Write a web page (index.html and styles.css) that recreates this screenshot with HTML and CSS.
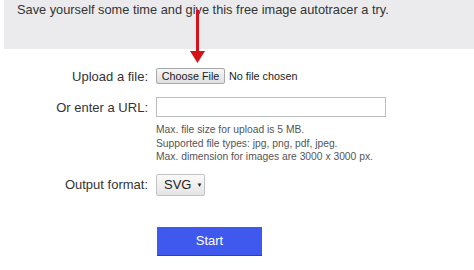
FILE: index.html
```html
<!DOCTYPE html>
<html lang="en">
<head>
  <meta charset="UTF-8" />
  <title>Autotracer</title>
  <link rel="stylesheet" href="styles.css">
</head>
<body>
  <div class="intro">Save yourself some time and give this free image autotracer a try.</div>

  <svg class="arrow" width="16" height="54" viewBox="0 0 16 54">
    <rect x="6" y="0" width="3" height="42" fill="#d3121a"/>
    <polygon points="0,41 15,41 7.5,53" fill="#d3121a"/>
  </svg>

  <form class="form">
    <div class="row">
      <label class="lbl">Upload a file:</label>
      <div class="ctl">
        <button type="button" class="filebtn">Choose File</button>
        <span class="nofile">No file chosen</span>
      </div>
    </div>

    <div class="row url-row">
      <label class="lbl">Or enter a URL:</label>
      <div class="ctl"><input type="text" class="url"></div>
    </div>

    <div class="row help-row">
      <span class="lbl"></span>
      <div class="help">
        Max. file size for upload is 5 MB.<br>
        Supported file types: jpg, png, pdf, jpeg.<br>
        Max. dimension for images are 3000 x 3000 px.
      </div>
    </div>

    <div class="row fmt-row">
      <label class="lbl">Output format:</label>
      <div class="ctl"><span class="select">SVG <span class="caret">▼</span></span></div>
    </div>

    <div class="row start-row">
      <span class="lbl"></span>
      <button type="button" class="start">Start</button>
    </div>
  </form>
</body>
</html>
```

FILE: styles.css
```css
body {
  margin: 0;
  font-family: "Liberation Sans", Arial, sans-serif;
  font-size: 13px;
  color: #333;
  background: #fff;
}
.intro {
  margin-left: 4px;
  height: 49px;
  padding: 2px 13px 0;
  box-sizing: border-box;
  background: #ebebed;
  font-size: 12.8px;
  line-height: 15px;
}
.arrow {
  position: absolute;
  left: 190px;
  top: 10px;
}
.row {
  display: flex;
  align-items: center;
  gap: 8px;
}
.lbl {
  width: 148px;
  flex: none;
  text-align: right;
}
.ctl {
  display: flex;
  align-items: center;
  gap: 4px;
}
.form {
  margin-top: 19px;
}
.filebtn {
  height: 16px;
  width: 69px;
  padding: 0;
  font-family: inherit;
  font-size: 10.8px;
  color: #222;
  border: 1px solid #a9a9a9;
  border-radius: 2px;
  background: linear-gradient(#f6f6f6, #dedede);
}
.nofile {
  font-size: 10.8px;
  color: #222;
}
.url-row {
  margin-top: 13px;
}
.url {
  width: 230px;
  height: 20px;
  box-sizing: border-box;
  margin: 0;
  border: 1px solid #bdbdbd;
  background: #fff;
}
.help-row {
  margin-top: 6px;
  align-items: flex-start;
}
.help {
  font-size: 10.3px;
  line-height: 13.5px;
  color: #555;
}
.fmt-row {
  margin-top: 10px;
}
.select {
  display: inline-flex;
  align-items: center;
  gap: 5px;
  height: 22px;
  width: 49px;
  box-sizing: border-box;
  padding-left: 7px;
  color: #222;
  border: 1px solid #c4c4c4;
  border-radius: 2px;
  background: linear-gradient(#fafafa, #e4e4e4);
}
.caret {
  font-size: 6px;
}
.start-row {
  margin-top: 31px;
}
.start {
  margin-left: 1px;
  width: 105px;
  height: 29px;
  font-family: inherit;
  font-size: 13px;
  color: #fff;
  border: none;
  border-bottom: 1px solid #2c3fb8;
  background: #3f58ee;
}
```
